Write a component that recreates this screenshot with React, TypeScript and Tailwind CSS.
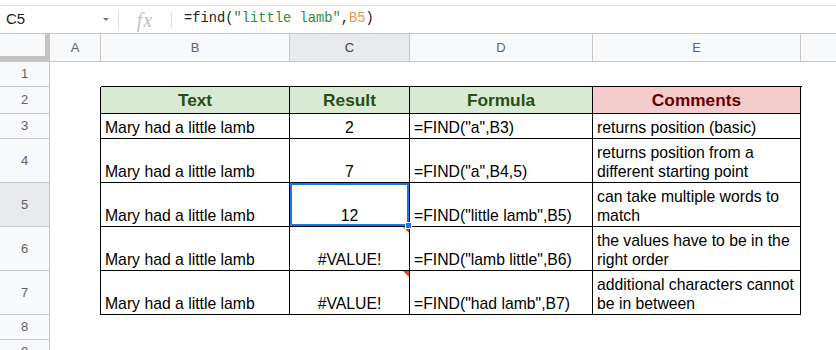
import React from "react";

type RowData = {
  n: number;
  h: string;
  b: string;
  c: string;
  d: string;
  e: string[];
  active?: boolean;
  sel?: boolean;
  tri?: boolean;
};

const rows: RowData[] = [
  { n: 3, h: "h-[25px]", b: "Mary had a little lamb", c: "2", d: '=FIND("a",B3)', e: ["returns position (basic)"] },
  { n: 4, h: "h-[44px]", b: "Mary had a little lamb", c: "7", d: '=FIND("a",B4,5)', e: ["returns position from a", "different starting point"] },
  { n: 5, h: "h-[44px]", b: "Mary had a little lamb", c: "12", d: '=FIND("little lamb",B5)', e: ["can take multiple words to", "match"], active: true, sel: true },
  { n: 6, h: "h-[44px]", b: "Mary had a little lamb", c: "#VALUE!", d: '=FIND("lamb little",B6)', e: ["the values have to be in the", "right order"], tri: true },
  { n: 7, h: "h-[44px]", b: "Mary had a little lamb", c: "#VALUE!", d: '=FIND("had lamb",B7)', e: ["additional characters cannot", "be in between"], tri: true },
];

function RowHead({ n, active }: { n: number; active?: boolean }) {
  return (
    <div
      className={`w-[50px] shrink-0 h-full border-r border-b border-[#c7c7c7] flex items-center justify-center text-[13px] font-normal leading-[16px] text-[#5f6368] ${
        active ? "bg-[#e8eaed]" : "bg-[#f8f9fa]"
      }`}
    >
      {n}
    </div>
  );
}

function Triangle() {
  return (
    <div className="absolute top-0 right-0 w-0 h-0 border-t-[6px] border-t-[#ea4335] border-l-[6px] border-l-transparent" />
  );
}

export default function App() {
  return (
    <div className="w-[836px] h-[350px] overflow-hidden bg-white font-['Liberation_Sans',Arial,sans-serif] text-black">
      {/* top strip */}
      <div className="h-[6px] border-b border-[#e0e0e0]" />
      {/* formula bar */}
      <div className="h-[28px] border-b border-[#c7c7c7] flex items-center">
        <div className="w-[118px] shrink-0 flex items-center pl-[6px] pr-[9px]">
          <span className="text-[15px] text-[#202124] flex-1">C5</span>
          <div className="w-0 h-0 border-l-[3px] border-r-[3px] border-t-[3px] border-l-transparent border-r-transparent border-t-[#757575]" />
        </div>
        <div className="w-px h-[20px] bg-[#e0e0e0]" />
        <div className="w-[52px] shrink-0 flex items-center justify-center">
          <span className="font-['Liberation_Serif',serif] italic text-[20px] text-[#c2c2c2] leading-none tracking-[1px]">fx</span>
        </div>
        <div className="w-px h-[16px] bg-[#e0e0e0]" />
        <div className="pl-[12px] font-['Liberation_Mono',monospace] text-[13.75px] text-[#202124] whitespace-pre">
          <span>=find(</span>
          <span className="text-[#2e8b3e]">"little lamb"</span>
          <span>,</span>
          <span className="text-[#f0954a]">B5</span>
          <span>)</span>
        </div>
      </div>
      {/* column headers */}
      <div className="h-[28px] flex border-b border-[#c7c7c7] text-[13px] text-[#5f6368]">
        <div className="w-[50px] shrink-0 h-full bg-[#f8f9fa] border-r-[5px] border-b-[5px] border-[#c4c4c4]" />
        <div className="w-[51px] shrink-0 h-full bg-[#f8f9fa] border-r border-[#c7c7c7] flex items-center justify-center">A</div>
        <div className="w-[189px] shrink-0 h-full bg-[#f8f9fa] border-r border-[#c7c7c7] flex items-center justify-center">B</div>
        <div className="w-[120px] shrink-0 h-full bg-[#e8eaed] border-r border-[#c7c7c7] flex items-center justify-center text-[#3c4043]">C</div>
        <div className="w-[183px] shrink-0 h-full bg-[#f8f9fa] border-r border-[#c7c7c7] flex items-center justify-center">D</div>
        <div className="w-[208px] shrink-0 h-full bg-[#f8f9fa] border-r border-[#c7c7c7] flex items-center justify-center">E</div>
        <div className="flex-1 h-full bg-[#f8f9fa]" />
      </div>

      {/* row 1 */}
      <div className="h-[25px] flex">
        <RowHead n={1} />
        <div className="w-[51px] shrink-0" />
        <div className="w-[189px] shrink-0 border-b border-black" />
        <div className="w-[120px] shrink-0 border-b border-black" />
        <div className="w-[183px] shrink-0 border-b border-black" />
        <div className="w-[209px] shrink-0 border-b border-black" />
        <div className="flex-1" />
      </div>

      {/* row 2 header */}
      <div className="h-[27px] flex">
        <RowHead n={2} />
        <div className="w-[51px] shrink-0 border-r border-black" />
        <div className="w-[189px] shrink-0 border-r border-b border-black bg-[#d9ead3] text-[#274e13] text-[17.3px] font-bold leading-[20px] flex flex-col justify-end items-center pb-[3px]">Text</div>
        <div className="w-[120px] shrink-0 border-r border-b border-black bg-[#d9ead3] text-[#274e13] text-[17.3px] font-bold leading-[20px] flex flex-col justify-end items-center pb-[3px]">Result</div>
        <div className="w-[183px] shrink-0 border-r border-b border-black bg-[#d9ead3] text-[#274e13] text-[17.3px] font-bold leading-[20px] flex flex-col justify-end items-center pb-[3px]">Formula</div>
        <div className="w-[208px] shrink-0 border-r border-b border-black bg-[#f4cccc] text-[#660000] text-[17.3px] font-bold leading-[20px] flex flex-col justify-end items-center pb-[3px]">Comments</div>
        <div className="flex-1" />
      </div>

      {rows.map((r) => (
        <div key={r.n} className={`${r.h} flex`}>
          <RowHead n={r.n} active={r.active} />
          <div className="w-[51px] shrink-0 border-r border-black" />
          <div className="w-[189px] shrink-0 border-r border-b border-black flex flex-col justify-end px-[4px] pb-[1px] whitespace-nowrap text-[15.75px] leading-[19px]">
            {r.b}
          </div>
          <div className="w-[120px] shrink-0 border-r border-b border-black flex flex-col justify-end items-center pb-[1px] relative whitespace-nowrap text-[15.75px] leading-[19px]">
            {r.c}
            {r.tri && <Triangle />}
            {r.sel && (
              <div className="absolute inset-0 border-2 border-[#1a73e8] z-10">
                <div className="absolute -right-[5px] -bottom-[5px] w-[7px] h-[7px] bg-[#1a73e8] border border-white" />
              </div>
            )}
          </div>
          <div className="w-[183px] shrink-0 border-r border-b border-black flex flex-col justify-end px-[4px] pb-[1px] whitespace-nowrap text-[15.75px] leading-[19px]">
            {r.d}
          </div>
          <div className="w-[208px] shrink-0 border-r border-b border-black flex flex-col justify-end px-[4px] pb-[1px] whitespace-nowrap text-[15.75px] leading-[19px]">
            {r.e.map((t, i) => (
              <div key={i}>{t}</div>
            ))}
          </div>
          <div className="flex-1" />
        </div>
      ))}

      {/* rows 8, 9 */}
      <div className="h-[25px] flex">
        <RowHead n={8} />
        <div className="flex-1" />
      </div>
      <div className="h-[25px] flex">
        <RowHead n={9} />
        <div className="flex-1" />
      </div>
    </div>
  );
}
